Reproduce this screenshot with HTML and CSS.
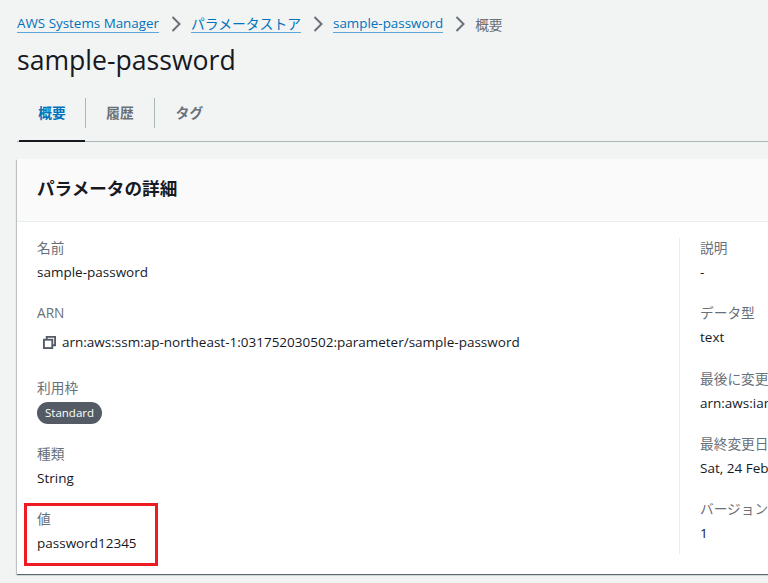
FILE: index.html
```html
<!DOCTYPE html>
<html lang="ja">
<head>
    <meta charset="utf-8">
    <title>sample-password</title>
    <link rel="stylesheet" href="styles.css">
</head>
<body>
    <nav class="breadcrumb">
        <a href="#">AWS Systems Manager</a>
        <svg class="crumb-arrow" viewBox="0 0 16 16"><path d="M4.5 1l7 7-7 7"/></svg>
        <a href="#" class="crumb-ja">パラメータストア</a>
        <svg class="crumb-arrow" viewBox="0 0 16 16"><path d="M4.5 1l7 7-7 7"/></svg>
        <a href="#">sample-password</a>
        <svg class="crumb-arrow" viewBox="0 0 16 16"><path d="M4.5 1l7 7-7 7"/></svg>
        <span class="crumb-current">概要</span>
    </nav>

    <h1 class="page-title">sample-password</h1>

    <div class="tabs">
        <a href="#" class="tab active">概要</a>
        <a href="#" class="tab">履歴</a>
        <a href="#" class="tab">タグ</a>
    </div>

    <section class="card">
        <div class="card-header">
            <h2>パラメータの詳細</h2>
        </div>
        <div class="card-body">
            <div class="col col-left">
                <div class="field field-name">
                    <div class="label">名前</div>
                    <div class="value">sample-password</div>
                </div>
                <div class="field field-arn">
                    <div class="label">ARN</div>
                    <div class="value copy-row">
                        <svg class="copy-icon" viewBox="1 1 14 14"><path d="M5 5V2h9v9h-3"/><rect x="2" y="5" width="9" height="9"/></svg>
                        arn:aws:ssm:ap-northeast-1:031752030502:parameter/sample-password
                    </div>
                </div>
                <div class="field field-tier">
                    <div class="label">利用枠</div>
                    <span class="badge">Standard</span>
                </div>
                <div class="field field-type">
                    <div class="label">種類</div>
                    <div class="value">String</div>
                </div>
                <div class="field">
                    <div class="label">値</div>
                    <div class="value">password12345</div>
                </div>
                <div class="highlight"></div>
            </div>
            <div class="col col-right">
                <div class="field">
                    <div class="label">説明</div>
                    <div class="value">-</div>
                </div>
                <div class="field field-datatype">
                    <div class="label">データ型</div>
                    <div class="value">text</div>
                </div>
                <div class="field">
                    <div class="label">最後に変更したユーザー</div>
                    <div class="value">arn:aws:iam::031752030502:user/admin</div>
                </div>
                <div class="field">
                    <div class="label">最終変更日</div>
                    <div class="value">Sat, 24 Feb 2024 08:12:45 GMT</div>
                </div>
                <div class="field">
                    <div class="label">バージョン</div>
                    <div class="value">1</div>
                </div>
            </div>
        </div>
    </section>
</body>
</html>
```

FILE: styles.css
```css
* {
    margin: 0;
    padding: 0;
    box-sizing: border-box;
    font-family: "Open Sans", "Noto Sans CJK JP", sans-serif;
}

html,
body {
    width: 768px;
    height: 583px;
    overflow: hidden;
}

body {
    background: #f2f3f3;
    color: #16191f;
    padding: 14px 0 0 17px;
    font-size: 13.5px;
}

.breadcrumb {
    display: flex;
    align-items: center;
    height: 20px;
    font-size: 13.4px;
    white-space: nowrap;
}

.breadcrumb a {
    color: #0073bb;
    text-decoration: none;
    border-bottom: 1px solid #5ba7d9;
    line-height: 17px;
}

.breadcrumb .crumb-ja {
    font-size: 13.8px;
}

.crumb-arrow {
    width: 16px;
    height: 16px;
    margin: 0 7px 0 9px;
    fill: none;
    stroke: #687078;
    stroke-width: 2;
}

.crumb-current {
    color: #687078;
    font-size: 13.7px;
}

.page-title {
    font-size: 26.6px;
    font-weight: 400;
    line-height: 36px;
    margin-top: 8px;
}

.tabs {
    display: flex;
    align-items: center;
    height: 46px;
    margin-top: 18px;
    border-bottom: 1px solid #aab7b8;
    padding-bottom: 12px;
    position: relative;
}

.tab {
    color: #687078;
    font-size: 13.7px;
    font-weight: 700;
    text-decoration: none;
    text-align: center;
    width: 69px;
    height: 30px;
    line-height: 29px;
    border-right: 1px solid #aab7b8;
}

.tab:first-child {
    margin-left: 2px;
    width: 67px;
}

.tab:last-child {
    border-right: none;
}

.tab.active {
    color: #0073bb;
}

.tab.active::after {
    content: "";
    position: absolute;
    left: 2px;
    bottom: -1px;
    width: 66px;
    height: 2px;
    background: #16191f;
}

.card {
    width: 900px;
    height: 415px;
    margin-top: 17px;
    background: #fff;
    box-shadow: 0 1px 1px 0 rgba(0, 28, 36, 0.5), 1px 1px 1px 0 rgba(0, 28, 36, 0.15), -1px 1px 1px 0 rgba(0, 28, 36, 0.15);
}

.card-header {
    height: 63px;
    background: #fafafa;
    border-bottom: 1px solid #eaeded;
    padding: 19px 20px 0;
}

.card-header h2 {
    font-size: 17.6px;
    font-weight: 700;
    line-height: 21px;
}

.card-body {
    display: flex;
    padding-top: 16px;
}

.col {
    position: relative;
    display: flex;
    flex-direction: column;
    gap: 15px;
    padding-left: 20px;
}

.col-left {
    flex: none;
    width: 663px;
    height: 316px;
    border-right: 1px solid #eaeded;
    gap: 14px;
}

.col-right {
    flex: 1;
    padding-left: 20px;
}

.field {
    flex: none;
    height: 50px;
    white-space: nowrap;
}

.field-name {
    height: 51px;
}

.field-arn {
    height: 61px;
}

.field-tier {
    height: 52px;
}

.field-type {
    height: 51px;
}

.field-datatype {
    height: 51px;
}

.label {
    color: #687078;
    font-size: 13.7px;
    line-height: 20px;
    margin-bottom: 4px;
}

.value {
    line-height: 20px;
}

.copy-row {
    display: flex;
    align-items: center;
    gap: 6px;
    margin-top: 9px;
    padding-left: 6px;
}

.copy-icon {
    width: 13px;
    height: 13px;
    fill: none;
    stroke: #545b64;
    stroke-width: 2;
}

.badge {
    display: inline-block;
    background: #545b64;
    color: #fff;
    font-size: 11.5px;
    line-height: 22px;
    padding: 0 8px;
    border-radius: 11px;
}

.highlight {
    position: absolute;
    left: 7px;
    top: 265px;
    width: 134px;
    height: 63px;
    border: 3px solid #ed1c24;
}
```
